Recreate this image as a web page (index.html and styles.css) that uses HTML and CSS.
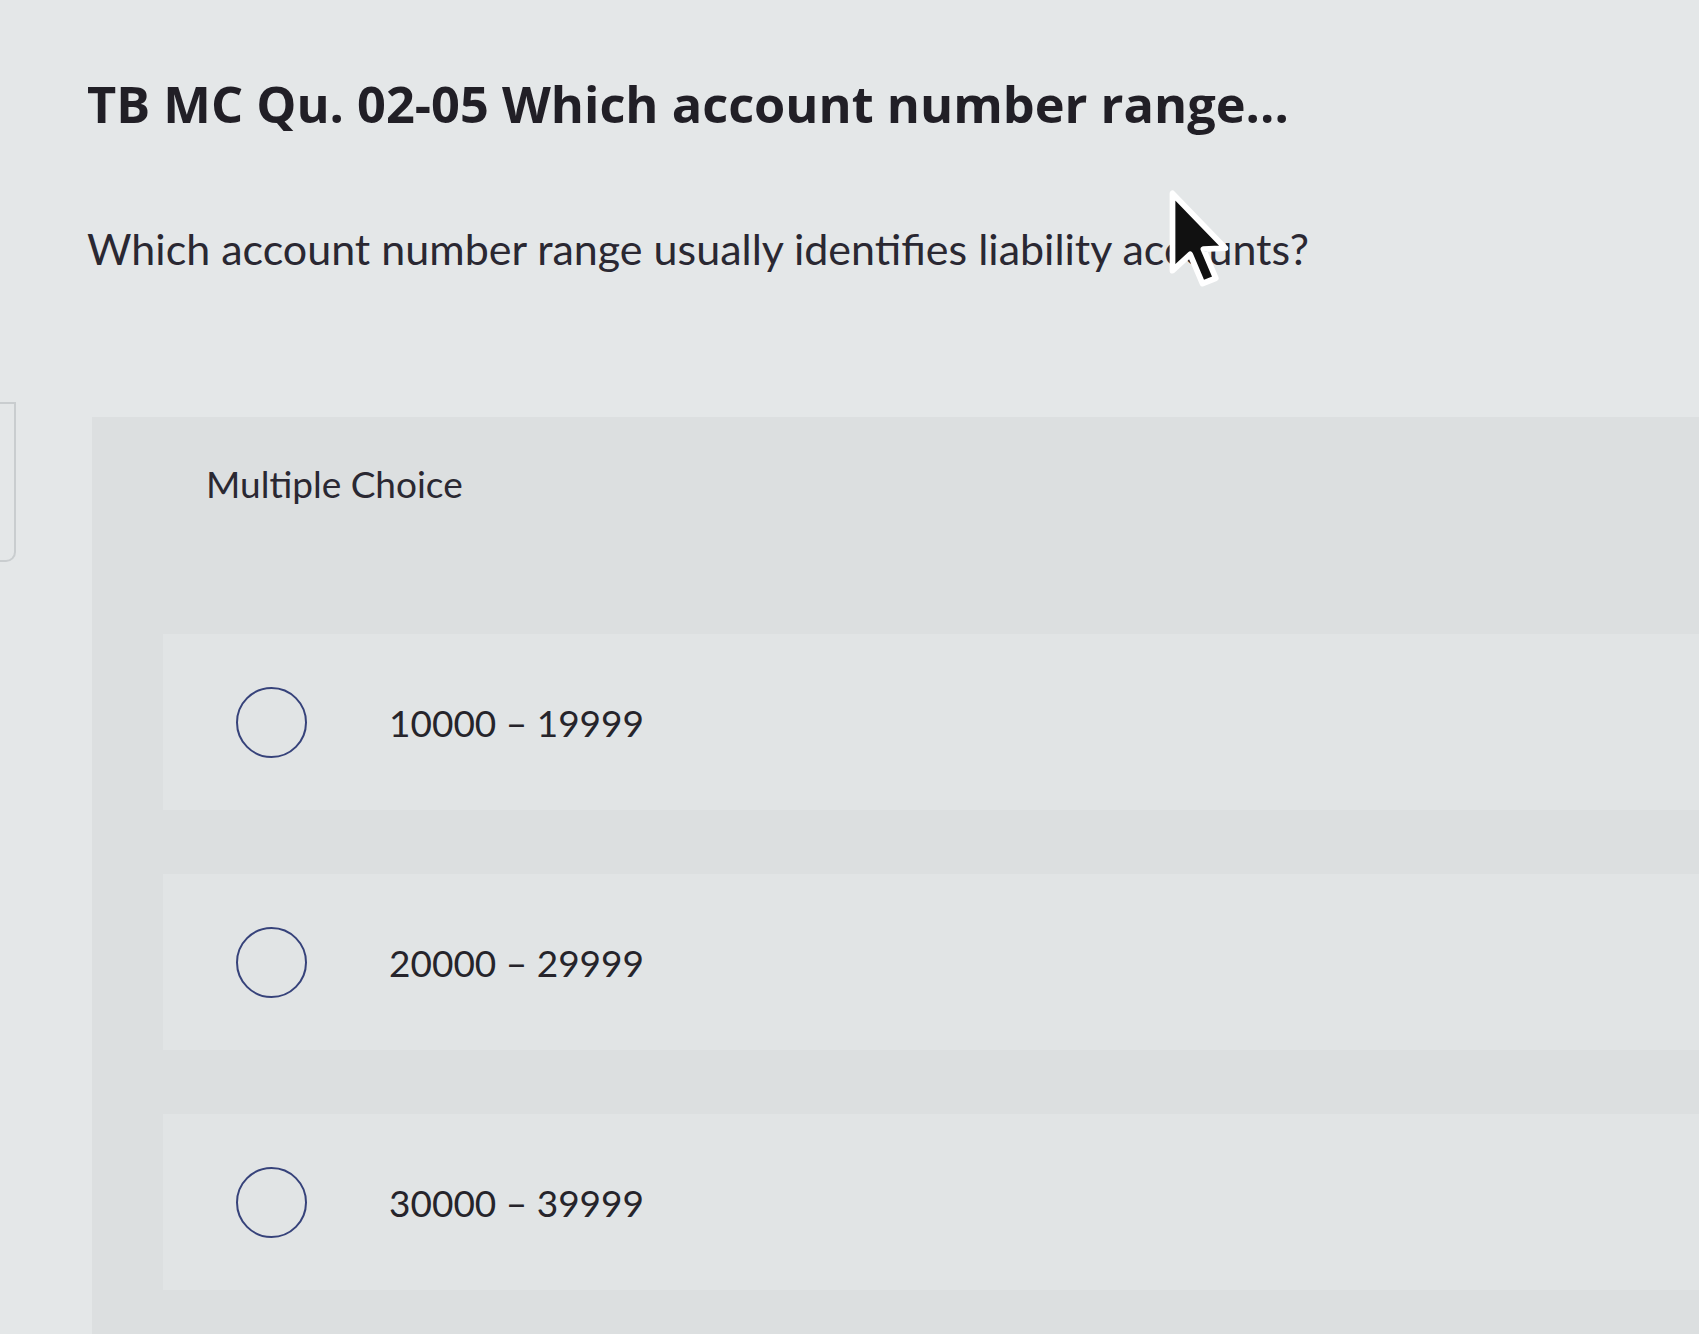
FILE: index.html
```html
<!DOCTYPE html>
<html lang="en">
<head>
    <meta charset="UTF-8">
    <meta name="viewport" content="width=device-width, initial-scale=1.0">
    <title>TB MC Qu. 02-05</title>
    <link rel="stylesheet" href="styles.css">
</head>
<body>
    <div class="question">
        <h1 class="title">TB MC Qu. 02-05 Which account number range...</h1>
        <p class="prompt">Which account number range usually identifies liability accounts?</p>
    </div>

    <div class="answer-row">
        <div class="side-tab"></div>

        <section class="choices">
            <div class="choices-head">Multiple Choice</div>
            <ul class="options">
                <li class="option">
                    <span class="radio"></span>
                    <span class="option-label">10000 &ndash; 19999</span>
                </li>
                <li class="option">
                    <span class="radio"></span>
                    <span class="option-label">20000 &ndash; 29999</span>
                </li>
                <li class="option">
                    <span class="radio"></span>
                    <span class="option-label">30000 &ndash; 39999</span>
                </li>
            </ul>
        </section>
    </div>

    <!-- mouse pointer sitting over the prompt -->
    <svg class="pointer" width="62" height="106" viewBox="-1 -1 14 24">
        <path d="M0 0 L0 17.5 L4 13.8 L6.8 20.4 L9.8 19.2 L7 12.6 L12 12.4 Z"
              fill="#111" stroke="#fff" stroke-width="1.3" stroke-linejoin="round"/>
    </svg>
</body>
</html>
```

FILE: styles.css
```css
body {
    font-family: 'Lato', 'Open Sans', sans-serif;
    background: #e4e7e8;
    color: #232127;
    margin: 0;
    min-height: 1334px;
    overflow: hidden;
    position: relative;
}

.question {
    padding: 74px 0 0 87px;
}

.title {
    font-family: 'Open Sans', 'Lato', sans-serif;
    font-size: 50.5px;
    font-weight: 700;
    line-height: 1.2;
    margin: 0;
    color: #211f26;
}

.prompt {
    font-size: 43px;
    font-weight: 400;
    line-height: 1.2;
    margin: 88px 0 0;
    color: #2a2832;
}

.answer-row {
    display: flex;
    margin-top: 128px;
}

.side-tab {
    width: 14px;
    height: 156px;
    border: 2px solid #c9cdcf;
    border-left: none;
    border-radius: 0 0 10px 0;
    margin-right: 76px;
    flex-shrink: 0;
}

.choices {
    flex: 1;
    background: #dcdfe0;
    margin-top: 15px;
    padding-bottom: 60px;
}

.choices-head {
    height: 133px;
    display: flex;
    align-items: center;
    padding-left: 114px;
    font-size: 37px;
    color: #2a2832;
}

.options {
    list-style: none;
    margin: 0;
    padding: 84px 0 0 71px;
    display: flex;
    flex-direction: column;
    gap: 64px;
}

.option {
    height: 176px;
    background: #e1e4e5;
    display: flex;
    align-items: center;
    padding-left: 73px;
}

.radio {
    width: 67px;
    height: 67px;
    border: 2.5px solid #36427a;
    border-radius: 50%;
    flex-shrink: 0;
}

.option-label {
    margin-left: 82px;
    font-size: 37px;
    color: #26242b;
}

.pointer {
    position: absolute;
    left: 1168px;
    top: 189px;
}
```
